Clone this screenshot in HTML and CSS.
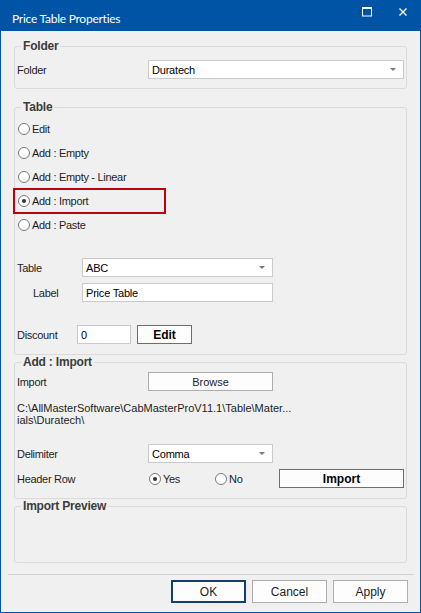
FILE: index.html
```html
<!DOCTYPE html>
<html lang="en">
<head>
    <meta charset="UTF-8">
    <meta name="viewport" content="width=device-width, initial-scale=1.0">
    <title>Price Table Properties</title>
    <link rel="stylesheet" href="styles.css">
</head>
<body>
    <div class="window">
        <div class="titlebar">
            <span class="title">Price Table Properties</span>
            <svg class="cap-max" width="10" height="10" viewBox="0 0 10 10">
                <rect x="0.5" y="1" width="9" height="8" fill="none" stroke="#fff" stroke-width="1"/>
                <line x1="0" y1="1" x2="10" y2="1" stroke="#fff" stroke-width="2"/>
            </svg>
            <svg class="cap-close" width="8" height="8" viewBox="0 0 8 8">
                <path d="M0.5 0.5 L7.5 7.5 M7.5 0.5 L0.5 7.5" stroke="#fff" stroke-width="1.4" fill="none"/>
            </svg>
        </div>

        <div class="client">
            <fieldset class="group group-folder">
                <legend>Folder</legend>
                <div class="field-row">
                    <span class="lbl col-wide">Folder</span>
                    <div class="combo w-folder">Duratech<span class="arrow"></span></div>
                </div>
            </fieldset>

            <fieldset class="group group-table">
                <legend>Table</legend>
                <div class="radio-row"><span class="radio"></span>Edit</div>
                <div class="radio-row"><span class="radio"></span>Add : Empty</div>
                <div class="radio-row"><span class="radio"></span>Add : Empty - Linear</div>
                <div class="radio-row marked"><span class="radio checked"></span>Add : Import</div>
                <div class="radio-row"><span class="radio"></span>Add : Paste</div>

                <div class="field-row row-table">
                    <span class="lbl col-table">Table</span>
                    <div class="combo w-table">ABC<span class="arrow"></span></div>
                </div>
                <div class="field-row row-label">
                    <span class="lbl col-table indent">Label</span>
                    <div class="textbox w-table">Price Table</div>
                </div>
                <div class="field-row row-discount">
                    <span class="lbl col-discount">Discount</span>
                    <div class="textbox w-discount">0</div>
                    <button class="btn btn-strong btn-edit">Edit</button>
                </div>
            </fieldset>

            <fieldset class="group group-import">
                <legend>Add : Import</legend>
                <div class="field-row">
                    <span class="lbl col-wide">Import</span>
                    <button class="btn w-half">Browse</button>
                </div>
                <p class="path">C:\AllMasterSoftware\CabMasterProV11.1\Table\Mater...<br>ials\Duratech\</p>
                <div class="field-row row-delim">
                    <span class="lbl col-wide">Delimiter</span>
                    <div class="combo w-half">Comma<span class="arrow"></span></div>
                </div>
                <div class="field-row row-header">
                    <span class="lbl col-wide">Header Row</span>
                    <span class="opt opt-yes"><span class="radio checked"></span>Yes</span>
                    <span class="opt"><span class="radio"></span>No</span>
                    <button class="btn btn-strong w-half btn-import">Import</button>
                </div>
            </fieldset>

            <fieldset class="group group-preview">
                <legend>Import Preview</legend>
                <div class="preview-body"></div>
            </fieldset>

            <div class="sep"></div>

            <div class="footer">
                <button class="btn btn-foot btn-default">OK</button>
                <button class="btn btn-foot">Cancel</button>
                <button class="btn btn-foot">Apply</button>
            </div>
        </div>
    </div>
</body>
</html>
```

FILE: styles.css
```css
body {
    margin: 0;
    background: #f0f0f0;
    font-family: "Liberation Sans", Arial, sans-serif;
    font-size: 11px;
    color: #1e1e1e;
}
.window {
    width: 421px;
    height: 613px;
    box-sizing: border-box;
    border: 1px solid #0054a6;
    border-top: none;
    background: #f0f0f0;
}
.titlebar {
    display: flex;
    align-items: flex-start;
    height: 31px;
    background: #0054a6;
    color: #fff;
}
.title {
    flex: 1;
    padding: 11px 0 0 11px;
    font-family: Lato, "Noto Sans", sans-serif;
    font-size: 12px;
    line-height: 15px;
    letter-spacing: -0.25px;
}
.cap-max {
    margin: 7px 27px 0 0;
}
.cap-close {
    margin: 8px 13px 0 0;
}

/* group boxes */
.group {
    width: 393px;
    box-sizing: border-box;
    margin: 0 0 0 13px;
    padding: 0 2px;
    border: 1px solid #dadada;
    border-radius: 3px;
    min-width: 0;
}
.group legend {
    margin-left: 4px;
    padding: 0 2px;
    font-weight: bold;
    font-size: 12px;
    line-height: 14px;
    letter-spacing: -0.2px;
    color: #3c3c3c;
}
.group-folder {
    margin-top: 8px;
    padding-top: 7px;
    padding-bottom: 9px;
}
.group-table {
    margin-top: 11px;
    padding-top: 3px;
    padding-bottom: 10px;
}
.group-import {
    padding-top: 3px;
    padding-bottom: 10px;
}
.preview-body {
    height: 49px;
}

.lbl {
    letter-spacing: -0.3px;
}
.col-wide { width: 131px; flex: none; }
.col-table { width: 65px; flex: none; box-sizing: border-box; }
.col-discount { width: 60px; flex: none; }
.indent { padding-left: 16px; }

.field-row {
    display: flex;
    align-items: center;
    height: 19px;
}
.row-table { margin-top: 21px; }
.row-label { margin-top: 6px; }
.row-discount { margin-top: 23px; }
.row-delim { margin-top: 18px; }
.row-header { margin-top: 6px; }

.combo, .textbox {
    display: flex;
    align-items: center;
    box-sizing: border-box;
    height: 19px;
    padding-left: 3px;
    background: #fff;
    border: 1px solid #cacaca;
    color: #000;
    letter-spacing: -0.2px;
}
.arrow {
    margin-left: auto;
    margin-right: 7px;
    border-left: 3px solid transparent;
    border-right: 3px solid transparent;
    border-top: 3px solid #777;
}
.w-folder { width: 256px; }
.w-table { width: 191px; }
.w-discount { width: 54px; }
.w-half { width: 125px; }

/* radios */
.radio-row {
    display: flex;
    align-items: center;
    height: 24px;
    letter-spacing: -0.3px;
}
.radio-row.marked {
    box-sizing: border-box;
    width: 151px;
    margin-left: -3px;
    padding-left: 3px;
    outline: 2px solid #c00010;
    outline-offset: -1px;
}
.radio {
    position: relative;
    width: 12px;
    height: 12px;
    box-sizing: border-box;
    margin: 0 2px 0 1px;
    border: 1px solid #7a7a7a;
    border-radius: 50%;
    background: #fff;
    flex: none;
}
.radio.checked::after {
    content: "";
    position: absolute;
    left: 3px;
    top: 3px;
    width: 4px;
    height: 4px;
    border-radius: 50%;
    background: #333;
}
.opt {
    display: flex;
    align-items: center;
    letter-spacing: -0.3px;
}
.opt-yes { width: 66px; }

/* buttons */
.btn {
    box-sizing: border-box;
    height: 19px;
    padding: 0;
    background: #fdfdfd;
    border: 1px solid #adadad;
    font-family: inherit;
    font-size: 11px;
    color: #1e1e1e;
}
.btn-strong {
    border-color: #6e6e6e;
    font-weight: bold;
    font-size: 12px;
    color: #000;
}
.btn-edit {
    width: 55px;
    margin-left: 6px;
}
.btn-import {
    margin-left: auto;
}

.path {
    margin: 11px 0 0;
    line-height: 12px;
}

.sep {
    width: 406px;
    height: 1px;
    margin: 11px 0 0 7px;
    background: #d4d4d4;
}
.footer {
    display: flex;
    justify-content: flex-end;
    gap: 6px;
    margin-top: 5px;
    padding-right: 12px;
}
.btn-foot {
    width: 75px;
    height: 23px;
    font-size: 12px;
}
.btn-default {
    border: 2px solid #123f6f;
}
```
